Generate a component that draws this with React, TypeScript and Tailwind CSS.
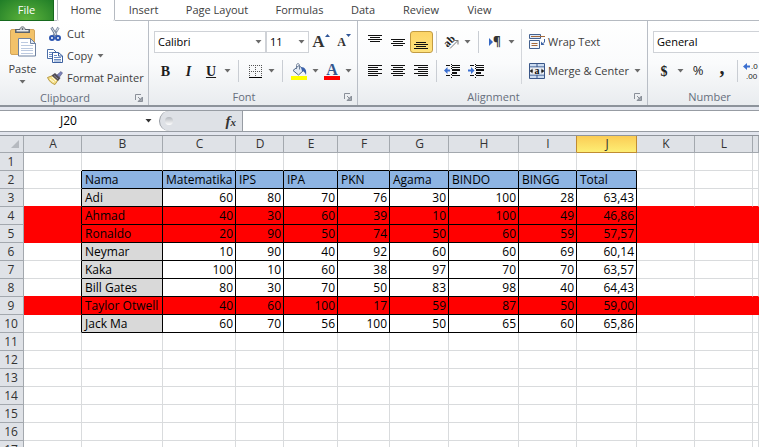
import React from "react";

type Kids = { children?: React.ReactNode };

const tabs = [
  { name: "Insert", width: "w-[57px]" },
  { name: "Page Layout", width: "w-[90px]" },
  { name: "Formulas", width: "w-[75px]" },
  { name: "Data", width: "w-[52px]" },
  { name: "Review", width: "w-[64px]" },
  { name: "View", width: "w-[53px]" },
];

const columns = [
  { name: "A", width: "w-[58px]" },
  { name: "B", width: "w-[81px]" },
  { name: "C", width: "w-[73px]" },
  { name: "D", width: "w-[48px]" },
  { name: "E", width: "w-[54px]" },
  { name: "F", width: "w-[52px]" },
  { name: "G", width: "w-[59px]" },
  { name: "H", width: "w-[70px]" },
  { name: "I", width: "w-[58px]" },
  { name: "J", width: "w-[60px]" },
  { name: "K", width: "w-[58px]" },
  { name: "L", width: "w-[58px]" },
  { name: "", width: "w-auto" },
];

const data: Record<number, string[]> = {
  2: ["Nama", "Matematika", "IPS", "IPA", "PKN", "Agama", "BINDO", "BINGG", "Total"],
  3: ["Adi", "60", "80", "70", "76", "30", "100", "28", "63,43"],
  4: ["Ahmad", "40", "30", "60", "39", "10", "100", "49", "46,86"],
  5: ["Ronaldo", "20", "90", "50", "74", "50", "60", "59", "57,57"],
  6: ["Neymar", "10", "90", "40", "92", "60", "60", "69", "60,14"],
  7: ["Kaka", "100", "10", "60", "38", "97", "70", "70", "63,57"],
  8: ["Bill Gates", "80", "30", "70", "50", "83", "98", "40", "64,43"],
  9: ["Taylor Otwell", "40", "60", "100", "17", "59", "87", "50", "59,00"],
  10: ["Jack Ma", "60", "70", "56", "100", "50", "65", "60", "65,86"],
};

const redRows = [4, 5, 9];
const rowNumbers = Array.from({ length: 17 }, (_, i) => i + 1);

function Caret({ dark = false }: { dark?: boolean }) {
  return (
    <svg width="7" height="4" viewBox="0 0 7 4" className={dark ? "text-[#333]" : "text-[#6b6b6b]"} aria-hidden="true">
      <path d="M0.5 0h6L3.5 3.6z" fill="currentColor" />
    </svg>
  );
}

function CaretButton({ label }: { label: string }) {
  return (
    <button aria-label={label} className="flex h-[22px] w-[11px] items-center justify-center">
      <Caret />
    </button>
  );
}

function Tool({ label, width = "w-[22px]", className = "", children }: Kids & { label: string; width?: string; className?: string }) {
  return (
    <button aria-label={label} className={`flex h-[22px] shrink-0 items-center justify-center ${width} ${className}`}>
      {children}
    </button>
  );
}

function Divider({ width = "w-[11px]" }: { width?: string }) {
  return (
    <span className={`flex h-[22px] shrink-0 justify-center ${width}`}>
      <span className="w-px bg-[#c9cdd3]" />
    </span>
  );
}

function Launcher({ label }: { label: string }) {
  return (
    <button aria-label={label} className="flex w-[18px] items-center justify-center">
      <svg width="8" height="8" viewBox="0 0 8 8" fill="none" stroke="#8a9099" aria-hidden="true">
        <path d="M0.5 6V0.5H6M3 3l3 3" />
        <path d="M7.5 3v4.5H3zM5 7h2V5" fill="#8a9099" />
      </svg>
    </button>
  );
}

function Group({ title, width, launcher = true, children }: Kids & { title: string; width: string; launcher?: boolean }) {
  return (
    <section aria-label={title} className={`flex shrink-0 flex-col border-r border-[#b9bec6] ${width}`}>
      <div className="flex h-[68px]">{children}</div>
      <div className="flex h-[17px] text-[#666e7c]">
        <span className="flex-1 text-center leading-[18px]">{title}</span>
        {launcher ? <Launcher label={`${title} settings`} /> : <span className="w-[18px]" />}
      </div>
    </section>
  );
}

function Picker({ label, value, width }: { label: string; value: string; width: string }) {
  return (
    <label className={`relative flex h-[22px] shrink-0 ${width}`}>
      <select aria-label={label} className="w-full appearance-none border border-[#cfd2d7] bg-white px-[3px] text-black" defaultValue={value}>
        <option>{value}</option>
      </select>
      <span className="pointer-events-none absolute top-[9px] right-1">
        <Caret />
      </span>
    </label>
  );
}

function Lines({ rows, top }: { rows: [number, number][]; top: number }) {
  return (
    <svg width="15" height="16" viewBox="0 0 15 16" shapeRendering="crispEdges" aria-hidden="true">
      {rows.map(([x, w], i) => (
        <rect key={i} x={x} y={top + i * 2} width={w} height="1" fill="#111" />
      ))}
    </svg>
  );
}

function PasteIcon() {
  return (
    <svg width="28" height="31" viewBox="0 0 28 31" aria-hidden="true">
      <rect x="1.500" y="3.500" width="24" height="25" rx="1.500" fill="#f2c26a" stroke="#d3a55c" />
      <path d="M6 3h15v4H6z" fill="#5f6670" />
      <path d="M7 6V3.500h4C11 0 16 0 16 3.500H20V6z" fill="#e6e9ed" stroke="#59616b" />
      <circle cx="13.500" cy="3" r="1" fill="#59616b" />
      <path d="M9.500 12.500h12l5 5v12.500h-17z" fill="#fff" stroke="#6f82a0" />
      <path d="M21.500 12.500v5h5z" fill="#dfe7f2" stroke="#6f82a0" />
      <path d="M12 16.500h7M12 19.500h12M12 22.500h12M12 24.500h12M12 27.500h12" stroke="#bccae0" />
    </svg>
  );
}

function CutIcon() {
  return (
    <svg width="16" height="16" viewBox="0 0 16 16" fill="none" aria-hidden="true">
      <path d="M4.500 1.500l5 8.500" stroke="#6c7b93" strokeWidth="2.500" />
      <path d="M11.500 1.500l-5 8.500" stroke="#8694a9" strokeWidth="2.500" />
      <path d="M4.500 1.500l4.500 7.500M11.500 1.500l-2 3.500" stroke="#dde3ec" />
      <circle cx="5" cy="12" r="2" stroke="#2c55b0" strokeWidth="2" />
      <circle cx="11" cy="12" r="2" stroke="#2c55b0" strokeWidth="2" />
    </svg>
  );
}

function CopyIcon() {
  return (
    <svg width="16" height="14" viewBox="0 0 16 14" aria-hidden="true">
      <path d="M0.500 0.500h6l3 3v6h-9z" fill="#fff" stroke="#4b6ea8" />
      <path d="M2 3.500h4M2 5.500h5M2 7.500h4" stroke="#6d8fc6" />
      <path d="M5.500 3.500h6l4 3.500v6.500h-10z" fill="#fff" stroke="#3b60a0" />
      <path d="M11.500 3.500V7h4" fill="none" stroke="#3b60a0" />
      <path d="M7 6.500h3M7 8.500h7M7 10.500h7M7 12h7" stroke="#6d8fc6" />
    </svg>
  );
}

function BrushIcon() {
  return (
    <svg width="16" height="14" viewBox="0 0 16 14" aria-hidden="true">
      <path d="M0.500 6.500L6 4.500l5 4.500-3 4.500C4.500 12.500 2 10 0.500 6.500z" fill="#f5e08a" stroke="#b99a42" />
      <path d="M3 8l4 3M5 6l4 4" stroke="#fffbe0" />
      <path d="M4.500 4.500L8 2l5.500 5-2.500 3z" fill="#4f4b55" />
      <path d="M7 4.500l4 3.500" stroke="#8c8894" />
      <path d="M10 4l4-3.500 1.500 1.500L12.500 6z" fill="#7d84bd" stroke="#3a3f66" strokeWidth="0.500" />
    </svg>
  );
}

function BorderIcon() {
  return (
    <svg width="13" height="13" viewBox="0 0 13 13" shapeRendering="crispEdges" aria-hidden="true">
      <path d="M0 0.500h13M0 6.500h13M0.500 0v12M6.500 0v12M12.500 0v12" stroke="#555" strokeDasharray="1 1" />
      <path d="M0 12.500h13" stroke="#000" />
    </svg>
  );
}

function FillIcon() {
  return (
    <svg width="16" height="17" viewBox="0 0 16 17" aria-hidden="true">
      <path d="M2 7.500L8 2.500l5 4.500-5.500 5z" fill="#e3ebf5" stroke="#52698d" />
      <path d="M5.500 6V2.500c0-2.500 3-2.500 3 0v4" fill="none" stroke="#6f7f98" />
      <path d="M10 4c4 0 6 3 5 8-1-2-2-4-4-4z" fill="#3b62ab" />
      <rect y="13" width="16" height="4" fill="#ffff00" />
    </svg>
  );
}

function FontColorIcon() {
  return (
    <span className="flex flex-col items-center">
      <span className="h-[13px] font-['Liberation_Serif',serif] text-[16px] leading-[14px] font-bold text-[#34568f]">A</span>
      <span className="h-1 w-4 bg-[#fe0000]" />
    </span>
  );
}

function OrientationIcon() {
  return (
    <svg width="20" height="18" viewBox="0 0 20 18" aria-hidden="true">
      <text x="3" y="12" transform="rotate(-45 8 9)" fontSize="11" fontWeight="bold" fontFamily="Liberation Serif" fill="#222">
        ab
      </text>
      <path d="M9 15.500l8-8M13 7.500h4v4" fill="none" stroke="#777" />
    </svg>
  );
}

function IndentIcon({ right = false }: { right?: boolean }) {
  return (
    <svg width="16" height="14" viewBox="0 0 16 14" aria-hidden="true">
      <g shapeRendering="crispEdges" fill="#111">
        <path d="M2 1h4v1H2zM8 1h8v1H8zM8 3h8v1H8zM8 5h8v2H8zM8 8h5v2H8zM2 11h4v1H2zM8 11h8v1H8z" />
        <path d="M7 0h1v1H7zM7 2h1v1H7zM7 4h1v1H7zM7 10h1v1H7zM7 13h1v1H7z" />
      </g>
      <path d={right ? "M6.500 6.500L3 3v2.500H0v2h3V10z" : "M0 6.500L3.500 3v2.500H6v2H3.500V10z"} fill="#3b6fd0" />
    </svg>
  );
}

function DirectionIcon() {
  return (
    <span className="flex items-center">
      <svg width="4" height="8" viewBox="0 0 4 8" aria-hidden="true">
        <path d="M0 0l4 4-4 4z" fill="#3568c4" />
      </svg>
      <span className="text-[12px] font-bold text-[#333]">¶</span>
    </span>
  );
}

function WrapIcon() {
  return (
    <svg width="16" height="16" viewBox="0 0 16 16" aria-hidden="true">
      <path d="M0.500 0.500h11v4h-11z" fill="#dfe9f6" stroke="#44618f" />
      <path d="M2 2.500h14" stroke="#a5693a" />
      <path d="M0.500 6.500h10v8h-10z" fill="#f3f7fc" stroke="#44618f" />
      <path d="M2.500 9.500h6M2.500 11.500h6" stroke="#a5693a" />
      <path d="M15.500 5v3l-2 2" fill="none" stroke="#3c62a4" />
      <path d="M12 7.500v3.500h3.500z" fill="#3c62a4" />
    </svg>
  );
}

function MergeIcon() {
  return (
    <svg width="16" height="16" viewBox="0 0 16 16" aria-hidden="true">
      <path d="M0.500 0.500h15v15h-15z" fill="#b4cbea" stroke="#3a5788" />
      <path d="M1 2h14M1 14h14" stroke="#e4edf8" />
      <path d="M0 4h16M0 12h16M8 0v4M8 12v4" stroke="#3a5788" />
      <path d="M1 4.500h14v7H1z" fill="#e9edf3" />
      <path d="M1 8h3M12 8h3" stroke="#222" />
      <path d="M3.500 5.500v5L1 8zM12.500 5.500v5L15 8z" fill="#222" />
      <text x="8" y="11" textAnchor="middle" fontSize="10" fontWeight="bold" fontFamily="Liberation Serif" fill="#111">
        a
      </text>
    </svg>
  );
}

function DecimalIcon() {
  return (
    <svg width="20" height="18" viewBox="0 0 20 18" aria-hidden="true">
      <path d="M0 4.500L4 1v2.500h3v2H4V8z" fill="#3b6fd0" />
      <text x="8" y="7" fontSize="8" fontFamily="Liberation Sans" fill="#222">.0</text>
      <text x="3" y="17" fontSize="8" fontFamily="Liberation Sans" fill="#222">.00</text>
    </svg>
  );
}

function Ribbon() {
  return (
    <div className="flex h-[86px] shrink-0 overflow-hidden border-b-2 border-[#8d939b] bg-linear-to-b from-white via-[#fafbfc] to-[#e9ecef]">
      <Group title="Clipboard" width="w-[149px]">
        <button className="flex w-[45px] flex-col items-center pt-[5px]">
          <PasteIcon />
          <span className="mt-[3px] h-[17px] leading-[17px]">Paste</span>
          <span className="mt-[3px]">
            <Caret />
          </span>
        </button>
        <div className="flex flex-col items-start pt-[2px] pl-0.5">
          <button className="flex h-[22px] items-center gap-1">
            <CutIcon />
            Cut
          </button>
          <button className="flex h-[22px] items-center gap-1">
            <CopyIcon />
            Copy
            <Caret />
          </button>
          <button className="flex h-[22px] items-center gap-1">
            <BrushIcon />
            Format Painter
          </button>
        </div>
      </Group>

      <Group title="Font" width="w-[209px]">
        <div className="flex flex-col gap-[7px] pt-[10px] pl-[5px]">
          <div className="flex">
            <Picker label="Font name" value="Calibri" width="w-[112px]" />
            <Picker label="Font size" value="11" width="w-[43px]" />
            <Tool label="Grow font" width="w-[24px]">
              <span className="font-['Liberation_Serif',serif] text-[17px] font-bold text-[#333]">A</span>
              <svg width="5" height="16" viewBox="0 0 5 16" aria-hidden="true">
                <path d="M0 3l2.500-3L5 3z" fill="#2f5597" />
              </svg>
            </Tool>
            <Tool label="Shrink font">
              <span className="font-['Liberation_Serif',serif] text-[12px] font-bold text-[#333]">A</span>
              <svg width="5" height="16" viewBox="0 0 5 16" aria-hidden="true">
                <path d="M0 0h5L2.500 3z" fill="#2f5597" />
              </svg>
            </Tool>
          </div>
          <div className="flex font-['Liberation_Serif',serif] text-[14px] text-[#1c1c1c]">
            <Tool label="Bold" width="w-[23px]" className="font-bold">B</Tool>
            <Tool label="Italic" width="w-[23px]" className="font-bold italic">I</Tool>
            <Tool label="Underline" className="font-bold underline">U</Tool>
            <CaretButton label="Underline styles" />
            <Divider />
            <Tool label="Borders"><BorderIcon /></Tool>
            <CaretButton label="Border styles" />
            <Divider />
            <Tool label="Fill color"><FillIcon /></Tool>
            <CaretButton label="Fill colors" />
            <Tool label="Font color"><FontColorIcon /></Tool>
            <CaretButton label="Font colors" />
          </div>
        </div>
      </Group>

      <Group title="Alignment" width="w-[290px]">
        <div className="flex flex-col gap-[7px] pt-[10px] pl-1.5">
          <div className="flex">
            <Tool label="Top align" width="w-[23px]">
              <Lines top={1} rows={[[0, 14], [2, 10], [0, 14], [2, 10]]} />
            </Tool>
            <Tool label="Middle align" width="w-[23px]">
              <Lines top={5} rows={[[0, 14], [2, 10], [0, 14], [2, 10]]} />
            </Tool>
            <Tool label="Bottom align" width="w-[23px]" className="rounded-[3px] border border-[#c29b42] bg-linear-to-b from-[#fdd567] to-[#fee27d]">
              <Lines top={8} rows={[[2, 10], [0, 14], [2, 10], [0, 14]]} />
            </Tool>
            <Divider width="w-[7px]" />
            <Tool label="Orientation"><OrientationIcon /></Tool>
            <CaretButton label="Orientation options" />
            <Divider />
            <Tool label="Text direction"><DirectionIcon /></Tool>
            <CaretButton label="Text direction options" />
          </div>
          <div className="flex">
            <Tool label="Align left" width="w-[23px]">
              <Lines top={2} rows={[[0, 14], [0, 10], [0, 14], [0, 10], [0, 14], [0, 10]]} />
            </Tool>
            <Tool label="Center" width="w-[23px]">
              <Lines top={2} rows={[[0, 14], [2, 10], [0, 14], [2, 10], [0, 14], [2, 10]]} />
            </Tool>
            <Tool label="Align right" width="w-[23px]">
              <Lines top={2} rows={[[0, 14], [4, 10], [0, 14], [4, 10], [0, 14], [4, 10]]} />
            </Tool>
            <Divider width="w-[7px]" />
            <Tool label="Decrease indent" width="w-[24px]"><IndentIcon /></Tool>
            <Tool label="Increase indent" width="w-[24px]"><IndentIcon right /></Tool>
          </div>
        </div>
        <span className="mx-1 mt-2 mb-1 w-px bg-[#d3d6db]" />
        <div className="flex flex-col items-start gap-[7px] pt-[10px] pl-[3px]">
          <button className="flex h-[22px] items-center gap-[3px]">
            <WrapIcon />
            Wrap Text
          </button>
          <button className="flex h-[22px] items-center gap-[3px]">
            <MergeIcon />
            Merge &amp; Center
            <span className="pl-0.5">
              <Caret />
            </span>
          </button>
        </div>
      </Group>

      <Group title="Number" width="w-[142px]">
        <div className="flex flex-col gap-[7px] pt-[10px] pl-[5px]">
          <Picker label="Number format" value="General" width="w-[130px]" />
          <div className="flex text-[#222]">
            <Tool label="Accounting format" className="font-['Liberation_Serif',serif] text-[14px] font-bold">$</Tool>
            <CaretButton label="Accounting formats" />
            <Tool label="Percent style" width="w-[24px]" className="text-[13px]">%</Tool>
            <Tool label="Comma style" width="w-[24px]" className="pb-2 font-['Liberation_Serif',serif] text-[20px] leading-[10px] font-bold">,</Tool>
            <Divider width="w-[7px]" />
            <Tool label="Increase decimal" width="w-[24px]"><DecimalIcon /></Tool>
          </div>
        </div>
      </Group>
    </div>
  );
}

function FormulaBar() {
  return (
    <div className="flex h-7 shrink-0 flex-col bg-[#e3e6ee] pt-[3px]">
      <div className="flex h-[22px] border-y border-[#979ca3] bg-white">
        <input aria-label="Name box" defaultValue="J20" className="w-[137px] bg-white text-center text-[12px] text-black outline-none" />
        <button aria-label="Named ranges" className="flex w-[22px] items-center justify-center">
          <Caret dark />
        </button>
        <div className="flex w-[84px] items-center justify-between rounded-l-[10px] border-x border-[#979ca3] bg-[#dee1e6] pr-[6px] pl-[5px]">
          <span className="h-2 w-2 rounded-full bg-linear-to-b from-[#b4b8be] to-white" />
          <button aria-label="Insert function" className="font-['Liberation_Serif',serif] text-[15px] leading-5 font-bold text-[#333] italic">
            f<span className="text-[11px]">x</span>
          </button>
        </div>
        <input aria-label="Formula" className="min-w-0 flex-1 bg-white px-1 outline-none" />
      </div>
    </div>
  );
}

function cellStyle(row: number, col: number) {
  const red = redRows.includes(row);
  const inTable = row >= 2 && row <= 10 && col >= 1 && col <= 9;
  const blackRight = row >= 2 && row <= 10 && col >= 0 && col <= 9;
  const blackBottom = row >= 1 && row <= 10 && col >= 1 && col <= 9;
  const redBelow = redRows.includes(row + 1);
  const fill = red ? "bg-[#ff0000]" : inTable && row === 2 ? "bg-[#8db4e3]" : inTable && col === 1 ? "bg-[#d9d9d9]" : "bg-white";
  const right = blackRight ? "border-r-black" : red ? "border-r-[#ff0000]" : "border-r-[#d9dbdd]";
  const bottom = blackBottom ? "border-b-black" : red || redBelow ? "border-b-[#ff0000]" : "border-b-[#d9dbdd]";
  const align = row === 2 || col === 1 ? "text-left" : "text-right";
  return `${fill} ${right} ${bottom} ${align}`;
}

function headingStyle(name: string) {
  if (name === "J") return "border-[#c08c32] bg-linear-to-b from-[#fbcc55] to-[#fdee74]";
  if (name === "I") return "border-r-[#c08c32] border-b-[#a3a8ae] bg-[#dfe2e7]";
  return "border-[#a3a8ae] bg-[#dfe2e7]";
}

function Sheet() {
  return (
    <div className="min-h-0 flex-1 overflow-hidden border-t border-[#8f949b] font-['Open_Sans','Noto_Sans',sans-serif] text-[12px] leading-[17px]">
      <table className="w-full table-fixed border-separate border-spacing-0">
        <thead>
          <tr className="h-[17px]">
            <th aria-label="Select all" className="w-6 border-r border-b border-[#a3a8ae] bg-[#dfe2e7] p-0">
              <svg width="8" height="8" viewBox="0 0 8 8" className="mr-1 ml-auto" aria-hidden="true">
                <path d="M8 0v8H0z" fill="#b5b9bf" />
              </svg>
            </th>
            {columns.map((c) => (
              <th key={c.name} scope="col" className={`border-r border-b p-0 pl-px leading-4 font-normal text-[#333] ${c.width} ${headingStyle(c.name)}`}>
                {c.name}
              </th>
            ))}
          </tr>
        </thead>
        <tbody>
          {rowNumbers.map((r) => (
            <tr key={r} className="h-[18px]">
              <th scope="row" className="border-r border-b border-[#a3a8ae] bg-[#dfe2e7] p-0 pr-px text-center font-normal text-[#333]">
                {r}
              </th>
              {columns.map((c, i) => (
                <td key={c.name} className={`border-r border-b p-0 pr-0.5 pl-[3px] whitespace-nowrap text-black ${cellStyle(r, i)}`}>
                  {i >= 1 && i <= 9 && data[r] ? data[r][i - 1] : null}
                </td>
              ))}
            </tr>
          ))}
        </tbody>
      </table>
    </div>
  );
}

export default function App() {
  return (
    <main className="flex h-screen flex-col overflow-hidden bg-white font-['Open_Sans','Noto_Sans',sans-serif] text-[11px] text-[#404040]">
      <nav aria-label="Ribbon tabs" className="flex h-[21px] shrink-0">
        <button className="w-[54px] border-r border-b border-[#16691d] bg-radial-[at_50%_100%] from-[#5fb53c] to-[#1f7d27] text-white">File</button>
        <span className="w-[3px] border-b border-[#b5bac1]" />
        <button className="w-[58px] rounded-b-[2px] border-x border-[#b5bac1]">Home</button>
        {tabs.map((t) => (
          <button key={t.name} className={`border-b border-[#b5bac1] ${t.width}`}>
            {t.name}
          </button>
        ))}
        <span className="flex-1 border-b border-[#b5bac1]" />
      </nav>
      <Ribbon />
      <FormulaBar />
      <Sheet />
    </main>
  );
}
